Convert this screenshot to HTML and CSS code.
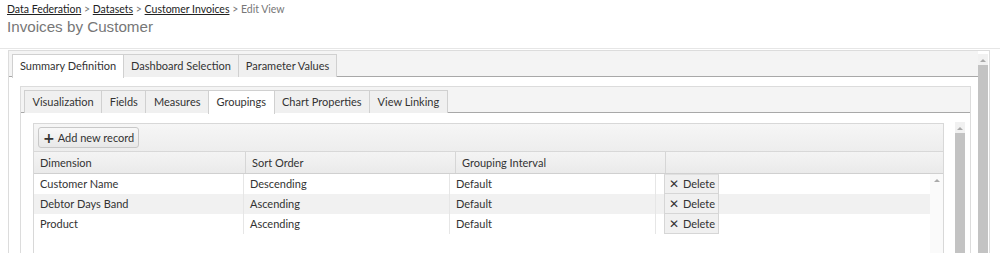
FILE: index.html
```html
<!DOCTYPE html>
<html>
<head>
<meta charset="utf-8">
<link rel="stylesheet" href="styles.css">
</head>
<body>
<div class="crumbs"><a href="#">Data Federation</a> &gt; <a href="#">Datasets</a> &gt; <a href="#">Customer Invoices</a> &gt; Edit View</div>
<div class="title">Invoices by Customer</div>
<div class="rule"></div>
<div class="outer">
  <div class="outer-main">
    <div class="tabbar outer-tabs">
      <div class="tab active">Summary Definition</div>
      <div class="tab">Dashboard Selection</div>
      <div class="tab">Parameter Values</div>
    </div>
    <div class="outer-body">
      <div class="inner">
        <div class="tabbar inner-tabs">
          <div class="tab">Visualization</div>
          <div class="tab">Fields</div>
          <div class="tab">Measures</div>
          <div class="tab active">Groupings</div>
          <div class="tab">Chart Properties</div>
          <div class="tab">View Linking</div>
        </div>
        <div class="inner-body">
          <div class="inner-content">
            <div class="grid">
              <div class="toolbar"><button class="btn"><span class="plus">+</span> Add new record</button></div>
              <div class="head">
                <div class="hc c1">Dimension</div>
                <div class="hc c2">Sort Order</div>
                <div class="hc c3">Grouping Interval</div>
                <div class="hc c4"></div>
              </div>
              <div class="gbody">
                <div class="rows">
                  <div class="row">
                    <div class="cell b1">Customer Name</div>
                    <div class="cell b2">Descending</div>
                    <div class="cell b3">Default</div>
                    <div class="cell b4"><span class="del"><span class="x">✕</span> Delete</span></div>
                  </div>
                  <div class="row alt">
                    <div class="cell b1">Debtor Days Band</div>
                    <div class="cell b2">Ascending</div>
                    <div class="cell b3">Default</div>
                    <div class="cell b4"><span class="del"><span class="x">✕</span> Delete</span></div>
                  </div>
                  <div class="row">
                    <div class="cell b1">Product</div>
                    <div class="cell b2">Ascending</div>
                    <div class="cell b3">Default</div>
                    <div class="cell b4"><span class="del"><span class="x">✕</span> Delete</span></div>
                  </div>
                </div>
                <div class="vscroll gscroll"><span class="arrow"></span></div>
              </div>
            </div>
          </div>
          <div class="vscroll iscroll"><span class="arrow"></span><div class="thumb"></div></div>
        </div>
      </div>
    </div>
  </div>
  <div class="vscroll oscroll"><span class="arrow"></span><div class="thumb"></div></div>
</div>
</body>
</html>
```
FILE: styles.css
```css
html, body { margin: 0; padding: 0; background: #fff; overflow: hidden; }
body { font-family: Lato, "Open Sans", sans-serif; font-size: 11px; color: #333; width: 1000px; height: 253px; }
.crumbs { height: 16px; line-height: 16px; padding: 1px 0 0 7px; color: #777; font-size: 10.5px; }
.crumbs a { color: #222; text-decoration: underline; }
.title { font-family: "Liberation Sans", Arial, sans-serif; font-size: 15.2px; color: #777; height: 18px; line-height: 18px; padding: 1px 0 0 7px; }
.rule { height: 1px; background: #e6e6e6; margin: 12px 0 0 0; width: 1000px; }
.outer { margin: 1px 0 0 8px; width: 980px; height: 260px; border: 1px solid #dcdcdc; display: flex; background: #fff; }
.outer-main { flex: 1; display: flex; flex-direction: column; min-width: 0; }
.tabbar { display: flex; background: #f4f4f4; padding: 3px 0 0 3px; border-bottom: 1px solid #a8a8a8; height: 22px; }
.tab { height: 22px; line-height: 22px; padding: 0 7.5px; border: 1px solid #d0d0d0; border-bottom: none; background: #f0f0f0; color: #333; margin-right: -1px; white-space: nowrap; }
.outer-tabs .tab { padding: 0 7px; }
.tab.active { background: #fff; height: 23px; margin-bottom: -1px; }
.outer-body { padding: 9px 0 0 11px; }
.inner { border: 1px solid #dcdcdc; width: 949px; height: 200px; display: flex; flex-direction: column; }
.inner-tabs { padding-top: 3px; }
.inner-body { display: flex; flex: 1; }
.inner-content { flex: 1; padding: 10px 0 0 12px; }
.grid { width: 909px; border: 1px solid #d8d8d8; border-bottom: none; height: 130px; display: flex; flex-direction: column; }
.toolbar { height: 28px; background: linear-gradient(#f6f6f6, #ededed); border-bottom: 1px solid #d8d8d8; padding: 3px 0 0 4px; box-sizing: border-box; }
.btn { font: inherit; color: #333; height: 21px; padding: 0 4px 0 4px; border: 1px solid #c8c8c8; border-radius: 3px; background: linear-gradient(#f8f8f8, #e8e8e8); display: flex; align-items: center; gap: 3px; }
.plus { font-weight: 900; font-size: 14px; line-height: 1; font-family: "DejaVu Sans", sans-serif; }
.head { display: flex; height: 21px; background: linear-gradient(#f4f4f4, #eaeaea); border-bottom: 1px solid #d0d0d0; }
.hc { line-height: 21px; padding-left: 6px; border-right: 1px solid #d6d6d6; box-sizing: border-box; }
.c1 { width: 212px; } .c2 { width: 210px; } .c3 { width: 210px; } .c4 { flex: 1; border-right: none; }
.gbody { display: flex; flex: 1; }
.rows { flex: 1; }
.row { display: flex; height: 20px; }
.row.alt { background: #f1f1f1; }
.cell { line-height: 19px; padding-left: 6px; box-sizing: border-box; border-right: 1px solid #e6e6e6; }
.b1 { width: 210px; } .b2 { width: 206px; } .b3 { width: 206px; }
.b4 { flex: 1; border-right: none; padding-left: 8px; }
.del { display: inline-block; height: 19px; line-height: 19px; padding: 0 3px 0 4px; background: #f0f0f0; border: 1px solid #d6d6d6; border-top: none; color: #333; }
.row:first-child .del { border-top: 1px solid #e0e0e0; height: 18px; line-height: 18px; }
.x { font-weight: bold; font-size: 12px; font-family: "DejaVu Sans", sans-serif; margin-right: 1px; }
.vscroll { position: relative; background: #f1f1f1; display: flex; flex-direction: column; align-items: center; }
.arrow { width: 0; height: 0; border-left: 3px solid transparent; border-right: 3px solid transparent; border-bottom: 3px solid #aaa; margin-top: 5px; }
.thumb { background: #c3c3c3; width: 100%; flex: 1; margin-top: 3px; }
.gscroll { width: 13px; background: #fafafa; }
.iscroll { width: 10px; margin: 9px 5px 0 0; }
.oscroll { width: 10px; margin: 3px 1px 0 0; }
```
